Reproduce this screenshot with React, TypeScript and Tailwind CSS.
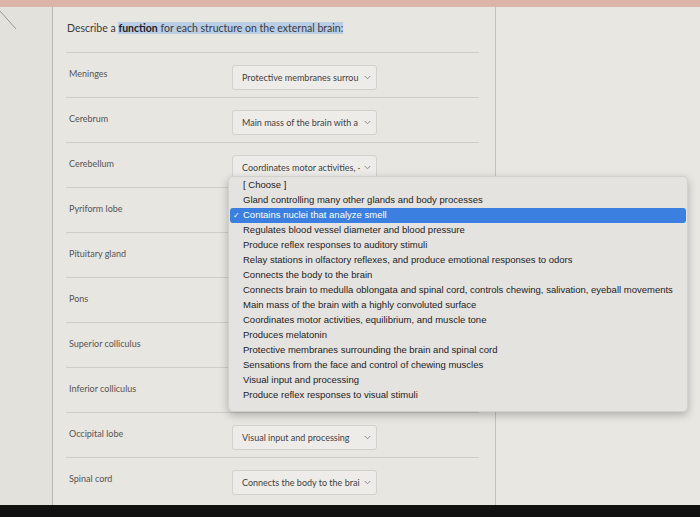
import React from "react";

const rows: { label: string; value?: string }[] = [
  { label: "Meninges", value: "Protective membranes surrou" },
  { label: "Cerebrum", value: "Main mass of the brain with a" },
  { label: "Cerebellum", value: "Coordinates motor activities, ·" },
  { label: "Pyriform lobe" },
  { label: "Pituitary gland" },
  { label: "Pons" },
  { label: "Superior colliculus" },
  { label: "Inferior colliculus" },
  { label: "Occipital lobe", value: "Visual input and processing" },
  { label: "Spinal cord", value: "Connects the body to the brai" },
];

const options = [
  "[ Choose ]",
  "Gland controlling many other glands and body processes",
  "Contains nuclei that analyze smell",
  "Regulates blood vessel diameter and blood pressure",
  "Produce reflex responses to auditory stimuli",
  "Relay stations in olfactory reflexes, and produce emotional responses to odors",
  "Connects the body to the brain",
  "Connects brain to medulla oblongata and spinal cord, controls chewing, salivation, eyeball movements",
  "Main mass of the brain with a highly convoluted surface",
  "Coordinates motor activities, equilibrium, and muscle tone",
  "Produces melatonin",
  "Protective membranes surrounding the brain and spinal cord",
  "Sensations from the face and control of chewing muscles",
  "Visual input and processing",
  "Produce reflex responses to visual stimuli",
];

function Chevron() {
  return (
    <svg width="7" height="5" viewBox="0 0 7 5" className="shrink-0">
      <path d="M0.8 1 L3.5 3.8 L6.2 1" fill="none" stroke="#8a8a8a" strokeWidth="1" />
    </svg>
  );
}

function SelectBox({ value }: { value: string }) {
  return (
    <div className="w-[145px] h-[25px] border border-[#d3d1cc] rounded-[3px] bg-[#eeece8] flex items-center pl-[9px] pr-[5px] gap-1">
      <span className="flex-1 whitespace-nowrap overflow-hidden text-[9px] text-[#3f3f3f]">{value}</span>
      <Chevron />
    </div>
  );
}

export default function App() {
  return (
    <div
      className="w-[700px] h-[517px] relative overflow-hidden bg-[#e8e6e1] flex flex-col"
      style={{ fontFamily: "Lato, 'Open Sans', sans-serif" }}
    >
      <div className="h-[7px] bg-[#dcb4aa] shrink-0" />
      <div className="flex-1 flex min-h-0">
        {/* left nav rail */}
        <div className="w-[53px] shrink-0 bg-[#e3e1dc] border-r border-[#b9b7b2] relative">
          <svg className="absolute left-0 top-0" width="20" height="30" viewBox="0 0 20 30">
            <path d="M0 4 L16 22" stroke="#9a9894" strokeWidth="1" fill="none" />
          </svg>
        </div>
        {/* question column */}
        <div className="w-[443px] shrink-0 border-r border-[#c4c2bd] pl-[13px] pr-[16px] flex flex-col">
          <div className="h-[45px] shrink-0 flex items-start pt-[14px]">
            <p className="text-[10.5px] text-[#3a3a3a] pl-[1px]">
              Describe a{" "}
              <span className="bg-[#b9cde6]">
                <span className="font-bold text-[#222]">function</span> for each structure on the external brain:
              </span>
            </p>
          </div>
          {rows.map((r, i) => (
            <div
              key={r.label}
              className={`border-t border-[#cfcdc8] shrink-0 flex items-start ${i === rows.length - 1 ? "h-[48px]" : "h-[45px]"}`}
            >
              <div className="w-[166px] shrink-0 pt-[14px] pl-[3px] text-[9px] text-[#555]">{r.label}</div>
              <div className="pt-[12px]">{r.value ? <SelectBox value={r.value} /> : null}</div>
            </div>
          ))}
        </div>
        {/* right blank area */}
        <div className="flex-1 bg-[#e9e7e2]" />
      </div>
      <div className="h-[12px] bg-[#111] shrink-0" />

      {/* open dropdown menu */}
      <div
        className="absolute left-[228px] top-[176px] w-[460px] h-[236px] rounded-[5px] bg-[#e5e3df] border border-[#d2d0cb] shadow-[0_3px_8px_rgba(0,0,0,0.25)] pt-[1px] px-[1px]"
        style={{ fontFamily: "'Liberation Sans', Arial, sans-serif" }}
      >
        {options.map((o, i) => {
          const sel = i === 2;
          return (
            <div
              key={o}
              className={`h-[15px] flex items-center text-[9.5px] whitespace-nowrap rounded-[3px] ${sel ? "bg-[#3b7fe0] text-white" : "text-[#222]"}`}
            >
              <span className="w-[13px] pl-[3px] text-[8px]">{sel ? "✓" : ""}</span>
              <span>{o}</span>
            </div>
          );
        })}
      </div>
    </div>
  );
}
